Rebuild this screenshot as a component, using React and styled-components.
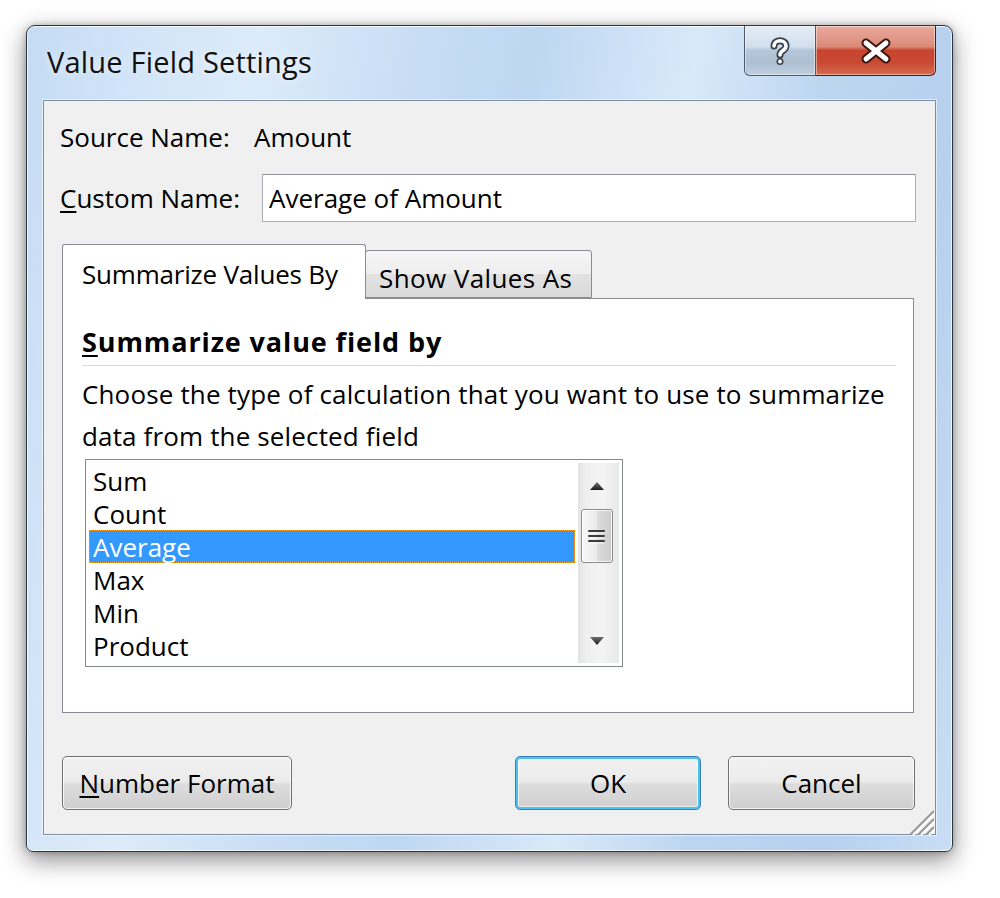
import React from "react";
import styled, { createGlobalStyle } from "styled-components";

const GlobalStyle = createGlobalStyle`
  html, body {
    margin: 0;
    padding: 0;
    background: #ffffff;
  }
  body {
    font-family: "Open Sans", "Noto Sans", sans-serif;
    font-size: 26px;
    color: #000;
  }
`;

const Desktop = styled.div`
  width: 1000px;
  height: 898px;
  box-sizing: border-box;
  padding: 25px 0 0 26px;
  overflow: hidden;
`;

const Window = styled.div`
  width: 927px;
  height: 827px;
  box-sizing: border-box;
  display: flex;
  flex-direction: column;
  padding: 0 16px 16px 16px;
  border: 1px solid #2c3540;
  border-radius: 9px 9px 7px 7px;
  background:
    linear-gradient(100deg,
      #c4dbf4 0%, #d3e5f8 12%, #dcebfa 22%, #c6dcf4 38%,
      #bed7f1 48%, #d0e3f7 58%, #d8e9f9 63%, #bdd6f0 75%,
      #b6d0ee 88%, #c9def5 100%);
  box-shadow:
    inset 0 0 0 1px rgba(255, 255, 255, 0.75),
    0 8px 24px rgba(0, 0, 0, 0.45),
    0 0 6px rgba(0, 0, 0, 0.25);
`;

const TitleBar = styled.div`
  height: 74px;
  display: flex;
  align-items: flex-start;
  justify-content: space-between;
`;

const Title = styled.div`
  margin: 20px 0 0 4px;
  font-size: 29px;
  line-height: 32px;
  color: #101010;
  letter-spacing: 0.2px;
  text-shadow: 0 0 8px rgba(255, 255, 255, 0.8);
`;

const CaptionButtons = styled.div`
  display: flex;
  height: 50px;
`;

const CaptionButton = styled.div`
  height: 50px;
  width: ${(p) => p.$w}px;
  box-sizing: border-box;
  display: flex;
  align-items: center;
  justify-content: center;
  border: 1px solid ${(p) => (p.$close ? "#4a1d16" : "#4e5a69")};
  border-top: none;
  border-left: ${(p) => (p.$close ? "none" : undefined)};
  border-radius: ${(p) => (p.$close ? "0 0 6px 0" : "0 0 0 6px")};
  background: ${(p) =>
    p.$close
      ? "linear-gradient(180deg, #e9aa9d 0%, #dc8a78 42%, #c7432d 50%, #c84a33 75%, #d86a4d 100%)"
      : "linear-gradient(180deg, #e3ecf6 0%, #d3dfec 42%, #b4c6da 50%, #aebfd2 75%, #bfd0e2 100%)"};
  box-shadow: inset 0 0 0 1px rgba(255, 255, 255, 0.45);
`;

const Client = styled.div`
  flex: 1;
  position: relative;
  display: flex;
  flex-direction: column;
  background: #f0f0f0;
  border: 1px solid #7f8fa3;
  box-shadow: 0 0 0 1px rgba(255, 255, 255, 0.55);
  padding: 0 19px 0 16px;
`;

const InfoRow = styled.div`
  display: flex;
  align-items: center;
  height: ${(p) => p.$h}px;
  margin-top: ${(p) => p.$top}px;
`;

const Label = styled.div`
  width: ${(p) => p.$w}px;
  flex-shrink: 0;
`;

const Value = styled.div``;

const TextBox = styled.div`
  width: 655px;
  height: 48px;
  box-sizing: border-box;
  display: flex;
  align-items: center;
  padding-left: 6px;
  background: #fff;
  border: 1px solid #abadb3;
  border-top-color: #8e9095;
`;

const Mnemonic = styled.span`
  text-decoration: underline;
  text-underline-offset: 3px;
  text-decoration-thickness: 1.5px;
`;

const TabArea = styled.div`
  margin: 22px 2px 0 2px;
  display: flex;
  flex-direction: column;
`;

const TabStrip = styled.div`
  display: flex;
  align-items: flex-end;
  height: 54px;
`;

const Tab = styled.div`
  position: relative;
  box-sizing: border-box;
  width: ${(p) => p.$w}px;
  height: ${(p) => (p.$active ? 55 : 48)}px;
  margin-left: ${(p) => (p.$active ? 0 : -1)}px;
  margin-bottom: ${(p) => (p.$active ? -1 : 0)}px;
  z-index: ${(p) => (p.$active ? 2 : 1)};
  padding: ${(p) => (p.$active ? "12px 0 0 19px" : "10px 0 0 13px")};
  line-height: 34px;
  letter-spacing: ${(p) => (p.$active ? "-0.2px" : "0.4px")};
  white-space: nowrap;
  border: 1px solid #898c95;
  border-bottom: ${(p) => (p.$active ? "none" : "1px solid #898c95")};
  border-radius: 3px 3px 0 0;
  background: ${(p) =>
    p.$active ? "#ffffff" : "linear-gradient(180deg, #f6f6f6 0%, #eeeeee 50%, #e2e2e2 51%, #dadada 100%)"};
`;

const Panel = styled.div`
  height: 415px;
  box-sizing: border-box;
  background: #fff;
  border: 1px solid #898c95;
  padding: 26px 17px 0 19px;
  display: flex;
  flex-direction: column;
`;

const SectionTitle = styled.div`
  font-size: 27px;
  font-weight: 700;
  line-height: 34px;
  letter-spacing: 0.9px;
`;

const Separator = styled.div`
  height: 1px;
  margin-top: 6px;
  background: #cfdbe6;
`;

const Description = styled.div`
  margin-top: 7px;
  line-height: 42px;
  letter-spacing: 0.15px;
  white-space: nowrap;
`;

const ListBox = styled.div`
  margin: 2px 0 0 3px;
  width: 538px;
  height: 208px;
  box-sizing: border-box;
  padding: 3px;
  display: flex;
  gap: 3px;
  background: #fff;
  border: 1px solid #828790;
`;

const Items = styled.div`
  flex: 1;
  padding-top: 1px;
`;

const Item = styled.div`
  height: 33px;
  box-sizing: border-box;
  display: flex;
  align-items: center;
  padding-left: 3px;
  color: ${(p) => (p.$selected ? "#ffffff" : "#000")};
  background: ${(p) => (p.$selected ? "#3399ff" : "transparent")};
  border: 1px dotted ${(p) => (p.$selected ? "#ff9f1c" : "transparent")};
`;

const ScrollBar = styled.div`
  width: 41px;
  display: flex;
  flex-direction: column;
  background: linear-gradient(90deg, #e3e3e3 0%, #efefef 20%, #f4f4f4 60%, #e8e8e8 100%);
`;

const ArrowButton = styled.div`
  height: ${(p) => p.$h}px;
  display: flex;
  align-items: center;
  justify-content: center;
  padding-right: 3px;
`;

const Thumb = styled.div`
  height: 54px;
  margin: 0 6px 0 3px;
  box-sizing: border-box;
  border: 1px solid #8c8c8c;
  border-radius: 3px;
  background: linear-gradient(90deg, #f7f7f7 0%, #ececec 45%, #dadada 55%, #cdcdcd 100%);
  box-shadow: inset 0 0 0 1px rgba(255, 255, 255, 0.8);
  display: flex;
  align-items: center;
  justify-content: center;
`;

const Track = styled.div`
  flex: 1;
`;

const Footer = styled.div`
  margin: 43px 0 0 2px;
  display: flex;
  align-items: center;
`;

const Button = styled.div`
  width: ${(p) => p.$w}px;
  height: 54px;
  box-sizing: border-box;
  margin-left: ${(p) => p.$ml || 0}px;
  display: flex;
  align-items: center;
  justify-content: center;
  border: 1px solid ${(p) => (p.$default ? "#3c7fb1" : "#707070")};
  border-radius: 5px;
  background: linear-gradient(180deg, #f2f2f2 0%, #ebebeb 48%, #dddddd 52%, #cfcfcf 100%);
  box-shadow: ${(p) =>
    p.$default
      ? "inset 0 0 0 2px #48c0f0, inset 0 0 0 3px rgba(255,255,255,0.6)"
      : "inset 0 0 0 1px rgba(255,255,255,0.75)"};
`;

const Grip = styled.div`
  position: absolute;
  right: 1px;
  bottom: 1px;
  width: 28px;
  height: 26px;
`;

const HelpIcon = () => (
  <svg width="22" height="30" viewBox="0 0 22 30">
    <path d="M5 10 C5 3 17 3 17 10 C17 15 11 14 11 19" fill="none" stroke="#37414d" strokeWidth="7" strokeLinecap="round" />
    <circle cx="11" cy="25.5" r="3.5" fill="#37414d" />
    <path d="M5 10 C5 3 17 3 17 10 C17 15 11 14 11 19" fill="none" stroke="#ffffff" strokeWidth="3.6" strokeLinecap="round" />
    <circle cx="11" cy="25.5" r="1.9" fill="#ffffff" />
  </svg>
);

const CloseIcon = () => (
  <svg width="34" height="26" viewBox="0 0 34 26">
    <path d="M7 5 L27 21 M27 5 L7 21" stroke="#3b1510" strokeWidth="9" strokeLinecap="round" />
    <path d="M7 5 L27 21 M27 5 L7 21" stroke="#ffffff" strokeWidth="5" strokeLinecap="round" />
  </svg>
);

const ArrowIcon = ({ down }) => (
  <svg width="16" height="10" viewBox="0 0 16 10">
    <defs>
      <linearGradient id={down ? "ad" : "au"} x1="0" y1="0" x2="0" y2="1">
        <stop offset="0" stopColor="#6e6e6e" />
        <stop offset="1" stopColor="#1c1c1c" />
      </linearGradient>
    </defs>
    <path d={down ? "M1 1 L15 1 L8 9 Z" : "M8 1 L15 9 L1 9 Z"} fill={`url(#${down ? "ad" : "au"})`} />
  </svg>
);

const GripLines = () => (
  <svg width="18" height="16" viewBox="0 0 18 16">
    <path d="M1 3 H16 M1 8 H16 M1 13 H16" stroke="#3c3c3c" strokeWidth="2" strokeLinecap="round" />
    <path d="M2 5 H16 M2 10 H16 M2 15 H16" stroke="#ffffff" strokeWidth="1" opacity="0.8" />
  </svg>
);

const ResizeGrip = () => (
  <svg width="28" height="26" viewBox="0 0 28 26">
    <path d="M4 26 L28 2 M12 26 L28 10 M20 26 L28 18" stroke="#9a9a9a" strokeWidth="2.4" />
    <path d="M7 26 L28 5 M15 26 L28 13 M23 26 L28 21" stroke="#ffffff" strokeWidth="2" />
  </svg>
);

const items = ["Sum", "Count", "Average", "Max", "Min", "Product"];

export default function App() {
  return (
    <>
      <GlobalStyle />
      <Desktop>
        <Window>
          <TitleBar>
            <Title>Value Field Settings</Title>
            <CaptionButtons>
              <CaptionButton $w={72}>
                <HelpIcon />
              </CaptionButton>
              <CaptionButton $w={120} $close>
                <CloseIcon />
              </CaptionButton>
            </CaptionButtons>
          </TitleBar>

          <Client>
            <InfoRow $h={40} $top={16}>
              <Label $w={194}>Source Name:</Label>
              <Value>Amount</Value>
            </InfoRow>

            <InfoRow $h={48} $top={17}>
              <Label $w={202}>
                <Mnemonic>C</Mnemonic>ustom Name:
              </Label>
              <TextBox>Average of Amount</TextBox>
            </InfoRow>

            <TabArea>
              <TabStrip>
                <Tab $active $w={304}>Summarize Values By</Tab>
                <Tab $w={227}>Show Values As</Tab>
              </TabStrip>
              <Panel>
                <SectionTitle>
                  <Mnemonic>S</Mnemonic>ummarize value field by
                </SectionTitle>
                <Separator />
                <Description>
                  Choose the type of calculation that you want to use to summarize
                  <br />
                  data from the selected field
                </Description>
                <ListBox>
                  <Items>
                    {items.map((it) => (
                      <Item key={it} $selected={it === "Average"}>
                        {it}
                      </Item>
                    ))}
                  </Items>
                  <ScrollBar>
                    <ArrowButton $h={46}>
                      <ArrowIcon />
                    </ArrowButton>
                    <Thumb>
                      <GripLines />
                    </Thumb>
                    <Track />
                    <ArrowButton $h={44}>
                      <ArrowIcon down />
                    </ArrowButton>
                  </ScrollBar>
                </ListBox>
              </Panel>
            </TabArea>

            <Footer>
              <Button $w={230}>
                <span>
                  <Mnemonic>N</Mnemonic>umber Format
                </span>
              </Button>
              <Button $w={186} $ml={223} $default>
                OK
              </Button>
              <Button $w={187} $ml={27}>
                Cancel
              </Button>
            </Footer>

            <Grip>
              <ResizeGrip />
            </Grip>
          </Client>
        </Window>
      </Desktop>
    </>
  );
}
